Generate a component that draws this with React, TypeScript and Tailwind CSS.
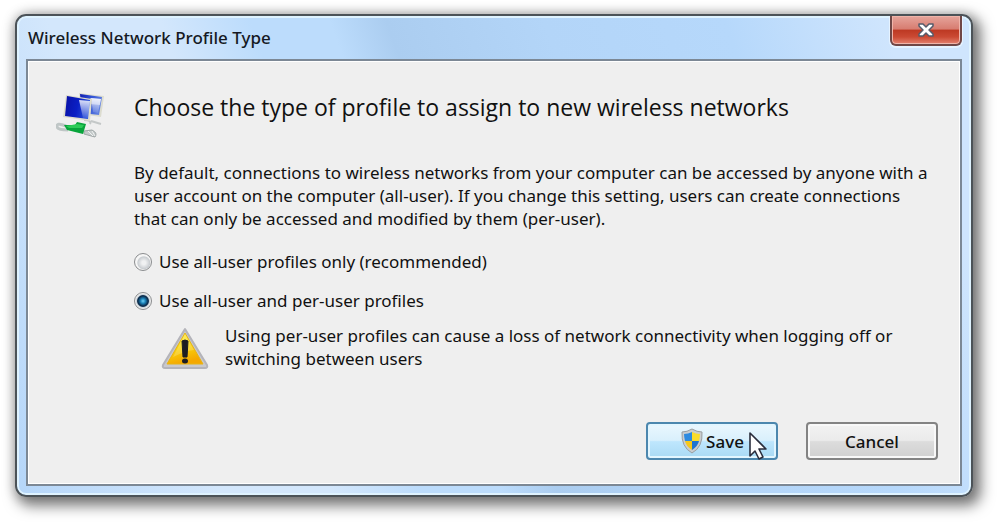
import { useState } from "react";

function NetworkIcon() {
  return (
    <svg viewBox="0 0 50 48" className="h-12 w-[50px] shrink-0" aria-hidden="true">
      <defs>
        <linearGradient id="screen" x1="0" y1="0.3" x2="1" y2="0.5">
          <stop offset="0" stopColor="#0a12a8" />
          <stop offset="0.5" stopColor="#0a1fc4" />
          <stop offset="1" stopColor="#2b55dc" />
        </linearGradient>
        <linearGradient id="rear" x1="0" y1="0" x2="1" y2="0.3">
          <stop offset="0" stopColor="#0f1cb0" />
          <stop offset="0.5" stopColor="#2f50d4" />
          <stop offset="1" stopColor="#5f7fe0" />
        </linearGradient>
        <linearGradient id="glare" x1="0" y1="0" x2="0" y2="1">
          <stop offset="0" stopColor="#fff" stopOpacity="0.85" />
          <stop offset="1" stopColor="#fff" stopOpacity="0.1" />
        </linearGradient>
      </defs>
      <path d="M23 2 48 5 45 26 25 23Z" fill="#dcdccf" />
      <path d="M24 3 46 6 43 24 26 22Z" fill="url(#rear)" />
      <path d="M35 7 45 8 42 22 37 21Z" fill="url(#glare)" />
      <path d="M34 7 45 8 44 14 34 13Z" fill="#fff" opacity="0.45" />
      <path d="M28 29Q36 29 34 33M35 30 45 33" stroke="#c4c8c8" strokeWidth="2" fill="none" />
      <path d="M10 4 36 8 34 30 7 26Z" fill="#dddccd" />
      <path d="M11 5 34 9 32 28 9 25Z" fill="url(#screen)" />
      <path d="M23 9 34 10 32 27 27 27Z" fill="url(#glare)" />
      <path d="M10 35Q0 31 1 36Q2 39 12 39" stroke="#bfc6c6" strokeWidth="3" fill="none" />
      <path d="M28 40 36 39Q42 42 39 46L28 43Z" fill="#c4caca" stroke="#9ea6a6" />
      <path d="M32 40 37 45M36 40 39 45" stroke="#eef0f0" strokeWidth="1" />
      <path d="M8 34 19 34 21 31 30 33 27 43 11 39Z" fill="#08a43b" />
      <path d="M10 35 21 33 28 34 26 37 13 37Z" fill="#2ccb58" />
    </svg>
  );
}

function WarningIcon() {
  return (
    <svg viewBox="0 0 48 44" className="h-11 w-12 shrink-0" aria-hidden="true">
      <defs>
        <linearGradient id="amber" x1="0" y1="0" x2="0.3" y2="1">
          <stop offset="0" stopColor="#fff04a" />
          <stop offset="0.5" stopColor="#f9d80e" />
          <stop offset="1" stopColor="#f5a800" />
        </linearGradient>
      </defs>
      <path
        d="M24 3 46 39Q47 42 44 42H4Q1 42 2 39Z"
        fill="#c9c9cd"
        stroke="#b4b4ba"
        strokeWidth="2"
        strokeLinejoin="round"
      />
      <path d="M24 7 42 38H6Z" fill="url(#amber)" stroke="#e8b414" />
      <path d="M24 8 33 24Q24 25 12 31Z" fill="#fff" opacity="0.2" />
      <path d="M21 15Q24 13 27 15L26 31H22Z" fill="#1d1d22" stroke="#1d1d22" />
      <ellipse cx="24" cy="35" rx="3" ry="2.5" fill="#1d1d22" />
    </svg>
  );
}

function ShieldIcon() {
  return (
    <svg viewBox="0 0 24 26" className="h-[26px] w-6 shrink-0" aria-hidden="true">
      <path d="M12 1Q17 4 22 4Q23 19 12 25Q1 19 2 4Q7 4 12 1Z" fill="#c9cdd0" stroke="#999ea1" />
      <path d="M12 4V13H5Q4 9 4 6Q8 6 12 4Z" fill="#2e8be0" />
      <path d="M12 4Q16 6 20 6Q20 9 19 13H12Z" fill="#fbdc2c" />
      <path d="M5 13H12V22Q6 18 5 13Z" fill="#f6c81b" />
      <path d="M19 13H12V22Q18 18 19 13Z" fill="#1d74d2" />
    </svg>
  );
}

function CloseIcon() {
  return (
    <svg viewBox="0 0 18 16" className="h-4 w-[18px]" aria-hidden="true">
      <path
        d="M2 2H6L9 5 12 2H16V4L12 8 16 12V14H12L9 11 6 14H2V12L6 8 2 4Z"
        fill="#fff"
        stroke="#555b6b"
        strokeWidth="1.5"
        strokeLinejoin="round"
      />
    </svg>
  );
}

function Pointer() {
  return (
    <svg
      viewBox="0 0 20 30"
      className="pointer-events-none absolute top-[9px] right-[10px] h-[30px] w-5"
      aria-hidden="true"
    >
      <path
        d="M2 2V25L7 20 11 28 15 26 11 18H18Z"
        fill="#fff"
        stroke="#2a2d3c"
        strokeWidth="1.6"
        strokeLinejoin="round"
      />
    </svg>
  );
}

const radioClass =
  "size-[18px] shrink-0 appearance-none rounded-full border border-[#8a8c8e] bg-[radial-gradient(circle_at_55%_55%,#f0f1f2_15%,#c9cdd1_48%,#f6f6f6_56%)] checked:bg-[radial-gradient(circle_at_50%_50%,#6fd0f5_0%,#1b82b8_22%,#0c2c4c_44%,#0c2c4c_48%,#c9d2d8_56%,#f2f2f2_68%)]";

const buttonClass = "flex h-[38px] w-[132px] items-center justify-center rounded border-2 font-medium";

export default function App() {
  const [profile, setProfile] = useState("per");

  return (
    <main className="bg-white pt-[14px] pr-[27px] pb-[26px] pl-[15px] font-['Noto_Sans','Open_Sans',sans-serif] text-[17px] leading-[23px] text-[#111111]">
      <section
        aria-labelledby="title"
        className="rounded-[11px] border-2 border-[#4c5358] bg-[linear-gradient(70deg,#b5d6f9_0%,#d3e7fc_18%,#d3e7fc_28%,#bcdcfc_36%,#bcdcfc_43%,#abcdf0_48%,#b3d5f8_62%,#b6d8fb_78%,#cfe5fd_92%,#cfe5fd_100%)] px-[9px] pb-[9px] shadow-[inset_0_0_0_2px_#dff3ff,5px_6px_14px_3px_rgba(0,0,0,0.5),0_0_12px_1px_rgba(0,0,0,0.16)]"
      >
        <header className="flex h-[43px] items-start justify-between pl-[2px]">
          <h1 id="title" className="pt-[10px] font-medium text-[#151923]">
            Wireless Network Profile Type
          </h1>
          <button
            type="button"
            aria-label="Close"
            className="flex h-[30px] w-[72px] items-center justify-center rounded-b-md border-2 border-t-0 border-[#704746] bg-[linear-gradient(#e6a59c_0%,#d77c70_47%,#bd3822_50%,#cb4a34_75%,#e58370_100%)] shadow-[inset_0_0_0_1px_#f0b5aa,0_1px_0_1px_#e6f3ff]"
          >
            <CloseIcon />
          </button>
        </header>

        <div className="flex min-h-[427px] flex-col border-2 border-[#7c8895] bg-[#efefef] px-[22px] pt-[30px] pb-[24px] shadow-[inset_0_0_0_1px_#ffffff]">
          <div className="flex flex-1 gap-7 pl-[6px]">
            <NetworkIcon />
            <div>
              <h2 className="font-['Open_Sans','Noto_Sans',sans-serif] text-[23px] leading-8">
                Choose the type of profile to assign to new wireless networks
              </h2>
              <p className="mt-[38px]">
                By default, connections to wireless networks from your computer can be accessed by anyone with a
                <br />
                user account on the computer (all-user). If you change this setting, users can create connections
                <br />
                that can only be accessed and modified by them (per-user).
              </p>
              <label className="mt-5 flex items-center gap-[7px]">
                <input
                  type="radio"
                  name="profile"
                  className={radioClass}
                  checked={profile === "all"}
                  onChange={() => setProfile("all")}
                />
                Use all-user profiles only (recommended)
              </label>
              <label className="mt-4 flex items-center gap-[7px]">
                <input
                  type="radio"
                  name="profile"
                  className={radioClass}
                  checked={profile === "per"}
                  onChange={() => setProfile("per")}
                />
                Use all-user and per-user profiles
              </label>
              <div className="mt-3 flex items-end gap-4 pl-[27px]">
                <WarningIcon />
                <p>
                  Using per-user profiles can cause a loss of network connectivity when logging off or
                  <br />
                  switching between users
                </p>
              </div>
            </div>
          </div>

          <footer className="flex justify-end gap-7">
            <div className="relative">
              <button
                type="button"
                className={`${buttonClass} gap-[2px] border-[#4c87ae] bg-[linear-gradient(#eaf7fe_0%,#d9f0fc_48%,#bee6fd_52%,#a9daf4_100%)] shadow-[inset_0_0_0_2px_#e2f6ff]`}
              >
                <ShieldIcon />
                Save
              </button>
              <Pointer />
            </div>
            <button
              type="button"
              className={`${buttonClass} border-[#838383] bg-[linear-gradient(#f2f2f2_0%,#ebebeb_48%,#dcdcdc_52%,#d0d0d0_100%)] shadow-[inset_0_0_0_2px_#f8f8f8]`}
            >
              Cancel
            </button>
          </footer>
        </div>
      </section>
    </main>
  );
}
